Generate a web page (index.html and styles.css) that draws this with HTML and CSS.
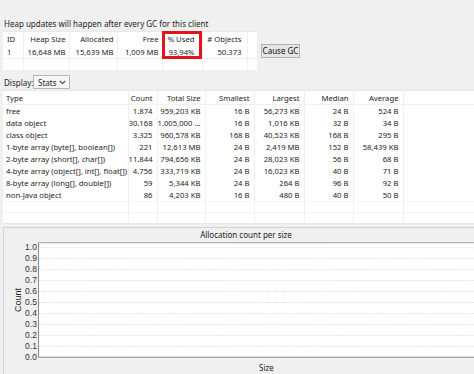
FILE: index.html
```html
<!DOCTYPE html>
<html>
<head>
<meta charset="utf-8">
<link rel="stylesheet" href="styles.css">
</head>
<body>
<div class="page">
  <div class="note">Heap updates will happen after every GC for this client</div>
  <div class="heap-row">
    <div class="heap-wrap">
      <table class="grid heap">
        <colgroup><col class="c1"><col class="c2"><col class="c3"><col class="c4"><col class="c5"><col class="c6"><col class="c7"></colgroup>
        <tr class="head"><th class="l">ID</th><th>Heap Size</th><th>Allocated</th><th>Free</th><th>% Used</th><th># Objects</th><th></th></tr>
        <tr class="r1"><td class="l">1</td><td>16,648 MB</td><td>15,639 MB</td><td>1,009 MB</td><td>93,94%</td><td>50.373</td><td></td></tr>
        <tr class="r2"><td></td><td></td><td></td><td></td><td></td><td></td><td></td></tr>
      </table>
      <div class="highlight"></div>
    </div>
    <div class="btn">Cause GC</div>
  </div>
  <div class="display-row">
    <span class="display-label">Display:</span>
    <div class="select"><span>Stats</span><svg width="7" height="5" viewBox="0 0 7 5"><path d="M0.8 1 L3.5 3.6 L6.2 1" fill="none" stroke="#444" stroke-width="1.1"/></svg></div>
  </div>
  <table class="grid types">
    <colgroup><col class="t1"><col class="t2"><col class="t3"><col class="t4"><col class="t5"><col class="t6"><col class="t7"><col></colgroup>
    <tr class="head"><th class="l">Type</th><th>Count</th><th>Total Size</th><th>Smallest</th><th>Largest</th><th>Median</th><th>Average</th><th></th></tr>
    <tr><td class="l">free</td><td>1.874</td><td>959,203 KB</td><td>16 B</td><td>56,273 KB</td><td>24 B</td><td>524 B</td><td></td></tr>
    <tr><td class="l">data object</td><td>30.168</td><td>1.005,000 ...</td><td>16 B</td><td>1,016 KB</td><td>32 B</td><td>34 B</td><td></td></tr>
    <tr><td class="l">class object</td><td>3.325</td><td>960,578 KB</td><td>168 B</td><td>40,523 KB</td><td>168 B</td><td>295 B</td><td></td></tr>
    <tr><td class="l">1-byte array (byte[], boolean[])</td><td>221</td><td>12,613 MB</td><td>24 B</td><td>2,419 MB</td><td>152 B</td><td>58,439 KB</td><td></td></tr>
    <tr><td class="l">2-byte array (short[], char[])</td><td>11.844</td><td>794,656 KB</td><td>24 B</td><td>28,023 KB</td><td>56 B</td><td>68 B</td><td></td></tr>
    <tr><td class="l">4-byte array (object[], int[], float[])</td><td>4.756</td><td>333,719 KB</td><td>24 B</td><td>16,023 KB</td><td>40 B</td><td>71 B</td><td></td></tr>
    <tr><td class="l">8-byte array (long[], double[])</td><td>59</td><td>5,344 KB</td><td>24 B</td><td>264 B</td><td>96 B</td><td>92 B</td><td></td></tr>
    <tr><td class="l">non-Java object</td><td>86</td><td>4,203 KB</td><td>16 B</td><td>480 B</td><td>40 B</td><td>50 B</td><td></td></tr>
    <tr class="empty"><td></td><td></td><td></td><td></td><td></td><td></td><td></td><td></td></tr>
    <tr class="empty"><td></td><td></td><td></td><td></td><td></td><td></td><td></td><td></td></tr>
  </table>
  <div class="chart">
    <div class="chart-title">Allocation count per size</div>
    <div class="chart-body">
      <div class="ylabel"><span>Count</span></div>
      <div class="yticks">
        <span>1.0</span><span>0.9</span><span>0.8</span><span>0.7</span><span>0.6</span><span>0.5</span><span>0.4</span><span>0.3</span><span>0.2</span><span>0.1</span><span>0.0</span>
      </div>
      <svg class="plot" width="452" height="116" viewBox="0 0 452 116">
        <rect x="0.5" y="0.5" width="451" height="115" fill="#fff" stroke="none"/>
        <g stroke="#dcdcdc" stroke-width="1" stroke-dasharray="1 1">
          <line x1="1" y1="5.5" x2="452" y2="5.5"/>
          <line x1="1" y1="16.5" x2="452" y2="16.5"/>
          <line x1="1" y1="27.5" x2="452" y2="27.5"/>
          <line x1="1" y1="38.5" x2="452" y2="38.5"/>
          <line x1="1" y1="49.5" x2="452" y2="49.5"/>
          <line x1="1" y1="60.5" x2="452" y2="60.5"/>
          <line x1="1" y1="71.5" x2="452" y2="71.5"/>
          <line x1="1" y1="82.5" x2="452" y2="82.5"/>
          <line x1="1" y1="93.5" x2="452" y2="93.5"/>
          <line x1="1" y1="104.5" x2="452" y2="104.5"/>
        </g>
        <path d="M0.5 0 V115.5 H452" fill="none" stroke="#8c8c8c"/>
        <line x1="0" y1="0.5" x2="452" y2="0.5" stroke="#a0a0a0"/>
      </svg>
    </div>
    <div class="xlabel">Size</div>
  </div>
</div>
</body>
</html>
```

FILE: styles.css
```css
html, body {
  margin: 0;
  padding: 0;
  background: #f0f0f0;
  overflow: hidden;
}

.page {
  width: 474px;
  height: 374px;
  font-family: "Noto Sans", "Open Sans", sans-serif;
  font-size: 8px;
  color: #1e1e1e;
  overflow: hidden;
}

.note {
  padding: 18px 0 0 4px;
  height: 13px;
  line-height: 12px;
}

.heap-row {
  display: flex;
  align-items: center;
  padding-left: 3px;
}

.heap-wrap {
  position: relative;
}

.grid {
  border-collapse: collapse;
  table-layout: fixed;
  background: #fff;
  font-size: 7.7px;
}

.grid th, .grid td {
  padding: 0 3px 0 0;
  text-align: right;
  font-weight: normal;
  white-space: nowrap;
  overflow: hidden;
  border-left: 1px solid #f0f0f0;
}

.grid th:first-child, .grid td:first-child {
  border-left: none;
}

.grid .l {
  text-align: left;
  padding-left: 4px;
}

.heap {
  width: 254px;
  border-top: 1px solid #e8e8e8;
}

.heap .c1 { width: 20px; }
.heap .c2 { width: 46px; }
.heap .c3 { width: 48px; }
.heap .c4 { width: 45px; }
.heap .c5 { width: 40px; }
.heap .c6 { width: 45px; }
.heap .c7 { width: 10px; }

.heap .head th { height: 14px; }
.heap .head th:nth-child(5) { padding-right: 7px; }
.heap .r1 td { height: 12px; border-bottom: 1px solid #f0f0f0; }
.heap .r1 td:nth-child(5) { padding-right: 7px; }
.heap .r1 td:nth-child(6) { padding-right: 5px; }
.heap .head th:nth-child(6) { padding-right: 5px; }
.heap .r2 td { height: 11px; }

.highlight {
  position: absolute;
  left: 159px;
  top: 0;
  width: 34px;
  height: 22px;
  border: 3px solid #e3121b;
}

.btn {
  margin: 0 0 0 4px;
  width: 37px;
  height: 12px;
  line-height: 12px;
  text-align: center;
  background: #e5e5e5;
  border: 1px solid #b3b3b3;
  color: #111;
}

.display-row {
  display: flex;
  align-items: center;
  padding: 5px 0 0 4px;
  height: 14px;
}

.display-label {
  width: 29px;
}

.select {
  height: 12px;
  border: 1px solid #b5b5b5;
  background: #f7f7f7;
  display: flex;
  align-items: center;
  justify-content: space-between;
  padding: 0 3px 0 4px;
  box-sizing: content-box;
  width: 28px;
}

.types {
  margin: 1px 0 0 3px;
  width: 520px;
  border-top: 1px solid #e6e6e6;
  border-bottom: 1px solid #e6e6e6;
}

.types .t1 { width: 125px; }
.types .t2 { width: 29px; }
.types .t3 { width: 48px; }
.types .t4 { width: 49px; }
.types .t5 { width: 50px; }
.types .t6 { width: 49px; }
.types .t7 { width: 50px; }

.types .l { padding-left: 3px; }
.types .head th { height: 13px; border-bottom: 1px solid #f0f0f0; }
.types td { height: 12px; padding-right: 4px; }
.types th { padding-right: 4px; }
.types .empty td { height: 10px; border-top: 1px solid #f4f4f4; }

.chart {
  margin: 3px 0 0 3px;
  width: 486px;
  height: 148px;
  border: 1px solid #d4d4d4;
  background: #f0f0f0;
  box-sizing: border-box;
}

.chart-title {
  height: 14px;
  line-height: 14px;
  text-align: center;
}

.chart-body {
  display: flex;
  height: 116px;
}

.ylabel {
  width: 20px;
  position: relative;
}

.ylabel span {
  position: absolute;
  left: 14px;
  top: 58px;
  transform: translate(-50%, -50%) rotate(-90deg);
  font-family: "Liberation Sans", Arial, sans-serif;
  font-size: 9px;
  color: #222;
}

.yticks {
  width: 13px;
  display: flex;
  flex-direction: column;
  align-items: flex-end;
  padding-right: 1px;
  margin-top: -0.5px;
  font-family: "Liberation Sans", Arial, sans-serif;
  font-size: 8.5px;
  color: #333;
}

.yticks span {
  height: 11px;
  line-height: 11px;
}

.plot {
  display: block;
}

.xlabel {
  padding-left: 255px;
  line-height: 14px;
  height: 14px;
  padding-top: 3px;
}
```
